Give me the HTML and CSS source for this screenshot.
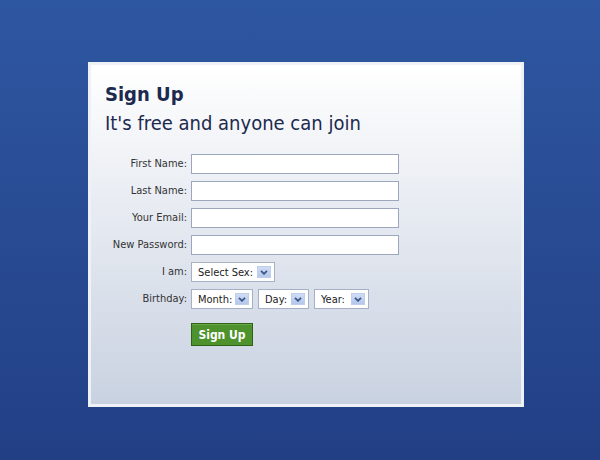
FILE: index.html
```html
<!DOCTYPE html>
<html>
<head>
<meta charset="utf-8">
<link rel="stylesheet" href="styles.css">
</head>
<body>
<div class="page">
  <div class="card">
    <h1 class="title">Sign Up</h1>
    <h2 class="subtitle">It's free and anyone can join</h2>
    <form class="form">
      <label class="lbl">First Name:</label>
      <div class="field"><input class="txt" type="text"></div>
      <label class="lbl">Last Name:</label>
      <div class="field"><input class="txt" type="text"></div>
      <label class="lbl">Your Email:</label>
      <div class="field"><input class="txt" type="text"></div>
      <label class="lbl">New Password:</label>
      <div class="field"><input class="txt" type="password"></div>
      <label class="lbl">I am:</label>
      <div class="field">
        <div class="sel sel-sex"><span class="sel-text">Select Sex:</span><span class="arrow"><svg width="8" height="5" viewBox="0 0 8 5"><path d="M1 0.8 L4 3.8 L7 0.8" fill="none" stroke="#3b5586" stroke-width="1.8"/></svg></span></div>
      </div>
      <label class="lbl">Birthday:</label>
      <div class="field bday">
        <div class="sel sel-month"><span class="sel-text">Month:</span><span class="arrow"><svg width="8" height="5" viewBox="0 0 8 5"><path d="M1 0.8 L4 3.8 L7 0.8" fill="none" stroke="#3b5586" stroke-width="1.8"/></svg></span></div>
        <div class="sel sel-day"><span class="sel-text">Day:</span><span class="arrow"><svg width="8" height="5" viewBox="0 0 8 5"><path d="M1 0.8 L4 3.8 L7 0.8" fill="none" stroke="#3b5586" stroke-width="1.8"/></svg></span></div>
        <div class="sel sel-year"><span class="sel-text">Year:</span><span class="arrow"><svg width="8" height="5" viewBox="0 0 8 5"><path d="M1 0.8 L4 3.8 L7 0.8" fill="none" stroke="#3b5586" stroke-width="1.8"/></svg></span></div>
      </div>
      <span class="lbl"></span>
      <div class="field btnrow"><button class="btn" type="button">Sign Up</button></div>
    </form>
  </div>
</div>
</body>
</html>
```

FILE: styles.css
```css
html, body {
  margin: 0;
  padding: 0;
}
body {
  width: 600px;
  height: 460px;
  overflow: hidden;
  background: linear-gradient(to bottom, #2e57a1 0%, #284b93 50%, #223f85 100%);
  font-family: "DejaVu Sans Condensed", "DejaVu Sans", sans-serif;
}
.page {
  padding: 62px 0 0 88px;
}
.card {
  box-sizing: border-box;
  width: 436px;
  height: 345px;
  border: 3px solid #eef1f6;
  background: linear-gradient(to bottom, #ffffff 0%, #e6eaf1 45%, #c9d2e1 100%);
  padding: 17px 14px 0 14px;
}
.title {
  margin: 0;
  font-size: 20px;
  line-height: 24px;
  font-weight: bold;
  color: #1c2a4e;
}
.subtitle {
  margin: 5px 0 0 0;
  font-size: 20px;
  line-height: 24px;
  font-weight: normal;
  color: #1c2a4e;
}
.form {
  margin-top: 19px;
  display: grid;
  grid-template-columns: 82px auto;
  grid-auto-rows: 20px;
  column-gap: 4px;
  row-gap: 7px;
}
.lbl {
  font-size: 11px;
  line-height: 20px;
  color: #333333;
  text-align: right;
  white-space: nowrap;
}
.field {
  display: flex;
  align-items: center;
  gap: 5px;
}
.txt {
  box-sizing: border-box;
  width: 208px;
  height: 20px;
  margin: 0;
  border: 1px solid #9ca7bf;
  background: #ffffff;
  padding: 0 3px;
}
.sel {
  box-sizing: border-box;
  height: 20px;
  border: 1px solid #a6b0c6;
  background: #ffffff;
  display: flex;
  align-items: center;
  justify-content: space-between;
  padding: 0 3px 0 6px;
}
.sel-text {
  font-size: 11px;
  color: #222222;
  white-space: nowrap;
}
.arrow {
  box-sizing: border-box;
  width: 14px;
  height: 12px;
  background: linear-gradient(to bottom, #cfdcf5, #b4c8ec);
  border: 1px solid #c0cfe9;
  display: flex;
  align-items: center;
  justify-content: center;
}
.arrow svg {
  display: block;
}
.sel-sex { width: 84px; }
.sel-month { width: 62px; }
.sel-day { width: 51px; }
.sel-year { width: 55px; }
.btnrow {
  margin-top: 7px;
  height: 23px;
}
.btn {
  box-sizing: border-box;
  width: 62px;
  height: 23px;
  margin: 0;
  padding: 0;
  border: 1px solid #2d6217;
  background: #4d922d;
  color: #ffffff;
  font-family: "DejaVu Sans Condensed", "DejaVu Sans", sans-serif;
  font-size: 12px;
  font-weight: bold;
  box-shadow: inset 0 1px 0 #69a848;
}
```
